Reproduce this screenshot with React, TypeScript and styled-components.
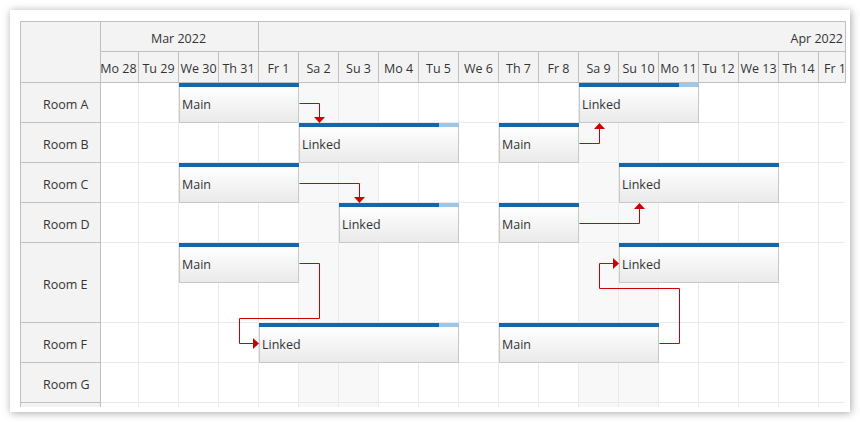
import React from 'react';
import styled, { createGlobalStyle } from 'styled-components';

const CELL = 40;

const days = [
  'Mo 28', 'Tu 29', 'We 30', 'Th 31', 'Fr 1', 'Sa 2', 'Su 3', 'Mo 4', 'Tu 5', 'We 6',
  'Th 7', 'Fr 8', 'Sa 9', 'Su 10', 'Mo 11', 'Tu 12', 'We 13', 'Th 14', 'Fr 15'
];

const isWeekend = (i: number) => i % 7 === 5 || i % 7 === 6;

interface SchedEvent {
  text: string;
  start: number;
  days: number;
  done?: number;
}

interface Room {
  id: string;
  name: string;
  height: number;
  events: SchedEvent[];
}

const rooms: Room[] = [
  { id: 'A', name: 'Room A', height: 40, events: [
    { text: 'Main', start: 2, days: 3 },
    { text: 'Linked', start: 12, days: 3, done: 83.34 }
  ] },
  { id: 'B', name: 'Room B', height: 40, events: [
    { text: 'Linked', start: 5, days: 4, done: 87.5 },
    { text: 'Main', start: 10, days: 2 }
  ] },
  { id: 'C', name: 'Room C', height: 40, events: [
    { text: 'Main', start: 2, days: 3 },
    { text: 'Linked', start: 13, days: 4 }
  ] },
  { id: 'D', name: 'Room D', height: 40, events: [
    { text: 'Linked', start: 6, days: 3, done: 83.34 },
    { text: 'Main', start: 10, days: 2 }
  ] },
  { id: 'E', name: 'Room E', height: 80, events: [
    { text: 'Main', start: 2, days: 3 },
    { text: 'Linked', start: 13, days: 4 }
  ] },
  { id: 'F', name: 'Room F', height: 40, events: [
    { text: 'Linked', start: 4, days: 5, done: 90 },
    { text: 'Main', start: 10, days: 4 }
  ] },
  { id: 'G', name: 'Room G', height: 40, events: [] },
  // next row, only its top edge is visible
  { id: 'H', name: '', height: 40, events: [] }
];

type Pt = [number, number];
type Dir = 'down' | 'up' | 'right';

// link routes in body pixel coordinates (day 0 / Room A top = 0,0)
const links: { points: Pt[]; dir: Dir }[] = [
  { points: [[200, 20], [220, 20], [220, 40]], dir: 'down' },
  { points: [[200, 100], [260, 100], [260, 120]], dir: 'down' },
  { points: [[480, 60], [500, 60], [500, 40]], dir: 'up' },
  { points: [[480, 140], [540, 140], [540, 120]], dir: 'up' },
  { points: [[200, 180], [220, 180], [220, 235], [140, 235], [140, 260], [160, 260]], dir: 'right' },
  { points: [[560, 260], [580, 260], [580, 205], [500, 205], [500, 180], [520, 180]], dir: 'right' }
];

const linkShape = (points: Pt[], dir: Dir) => {
  const [tx, ty] = points[points.length - 1];
  let tip: Pt;
  let base: Pt;
  let arrow: Pt[];
  if (dir === 'down') {
    tip = [tx + 0.5, ty];
    base = [tx + 0.5, ty - 6];
    arrow = [[tx - 5, ty - 6], [tx + 6, ty - 6], tip];
  } else if (dir === 'up') {
    tip = [tx + 0.5, ty];
    base = [tx + 0.5, ty + 6];
    arrow = [[tx - 5, ty + 6], [tx + 6, ty + 6], tip];
  } else {
    tip = [tx, ty + 0.5];
    base = [tx - 6, ty + 0.5];
    arrow = [[tx - 6, ty - 5], [tx - 6, ty + 6], tip];
  }
  const line = [...points.slice(0, -1).map(([x, y]) => [x + 0.5, y + 0.5]), base]
    .map((p) => p.join(','))
    .join(' ');
  return { line, arrow: arrow.map((p) => p.join(',')).join(' ') };
};

const App: React.FC = () => {
  return (
    <>
      <GlobalStyle />
      <Page>
        <Card>
          <Scheduler>
            <Corner />
            <HeaderViewport>
              <HeaderInner>
                <MonthRow>
                  <MonthCell $width={4 * CELL}>Mar 2022</MonthCell>
                  <MonthCell $grow>Apr 2022</MonthCell>
                </MonthRow>
                <DayRow>
                  {days.map((d) => (
                    <DayCell key={d}>{d}</DayCell>
                  ))}
                </DayRow>
              </HeaderInner>
            </HeaderViewport>

            <RowHeaderColumn>
              {rooms.map((r) => (
                <RowHeaderCell key={r.id} $height={r.height}>
                  {r.name}
                </RowHeaderCell>
              ))}
            </RowHeaderColumn>

            <BodyViewport>
              <BodyInner>
                {rooms.map((r) => (
                  <Row key={r.id} $height={r.height}>
                    {days.map((d, i) => (
                      <Cell key={d} $weekend={isWeekend(i)} />
                    ))}
                    {r.events.map((e) => (
                      <EventBox
                        key={e.text}
                        style={{ left: e.start * CELL, width: e.days * CELL }}
                      >
                        <EventBar>
                          <EventBarDone style={{ width: `${e.done ?? 100}%` }} />
                        </EventBar>
                        <EventBody>{e.text}</EventBody>
                      </EventBox>
                    ))}
                  </Row>
                ))}
                <Links width={days.length * CELL} height={324}>
                  {links.map((l, i) => {
                    const s = linkShape(l.points, l.dir);
                    return (
                      <g key={i}>
                        <polyline points={s.line} fill="none" stroke="#cc0000" strokeWidth={1} />
                        <polygon points={s.arrow} fill="#cc0000" />
                      </g>
                    );
                  })}
                </Links>
              </BodyInner>
            </BodyViewport>
          </Scheduler>
        </Card>
      </Page>
    </>
  );
};

export default App;

const GlobalStyle = createGlobalStyle`
  body {
    margin: 0;
    background: #ffffff;
    font-family: "Open Sans", "Noto Sans", sans-serif;
    color: #333333;
  }
`;

const Page = styled.div`
  padding: 10px;
`;

const Card = styled.div`
  box-sizing: border-box;
  width: 840px;
  height: 402px;
  padding: 11px 4px 5px 10px;
  background: #ffffff;
  box-shadow: 1px 1px 8px rgba(0, 0, 0, 0.35);
`;

const Scheduler = styled.div`
  display: grid;
  grid-template-columns: 80px 745px;
  grid-template-rows: 61px 324px;
  border-top: 1px solid #c0c0c0;
  border-left: 1px solid #c0c0c0;
  font-size: 12.5px;
  color: #333333;
`;

const Corner = styled.div`
  box-sizing: border-box;
  background: #f3f3f3;
  border-right: 1px solid #c0c0c0;
  border-bottom: 1px solid #c0c0c0;
`;

const HeaderViewport = styled.div`
  box-sizing: border-box;
  overflow: hidden;
  background: #f3f3f3;
  border-right: 1px solid #c0c0c0;
  border-bottom: 1px solid #c0c0c0;
`;

const HeaderInner = styled.div`
  width: 746px;
  margin-left: -2px;
`;

const MonthRow = styled.div`
  display: flex;
  height: 30px;
`;

const MonthCell = styled.div<{ $width?: number; $grow?: boolean }>`
  box-sizing: border-box;
  display: flex;
  align-items: center;
  justify-content: ${({ $grow }) => ($grow ? 'flex-end' : 'center')};
  flex: ${({ $grow, $width }) => ($grow ? '1 1 auto' : `0 0 ${$width}px`)};
  padding-top: 4px;
  padding-right: ${({ $grow }) => ($grow ? '2px' : '0')};
  border-bottom: 1px solid #c0c0c0;
  border-right: ${({ $grow }) => ($grow ? 'none' : '1px solid #c0c0c0')};
  white-space: nowrap;
`;

const DayRow = styled.div`
  display: flex;
  height: 30px;
`;

const DayCell = styled.div`
  box-sizing: border-box;
  flex: 0 0 ${CELL}px;
  display: flex;
  align-items: center;
  justify-content: center;
  padding-top: 2px;
  border-right: 1px solid #c0c0c0;
  white-space: nowrap;
  overflow: hidden;
`;

const RowHeaderColumn = styled.div`
  overflow: hidden;
`;

const RowHeaderCell = styled.div<{ $height: number }>`
  box-sizing: border-box;
  height: ${({ $height }) => $height}px;
  display: flex;
  align-items: center;
  padding: 4px 0 0 22px;
  background: #f3f3f3;
  border-right: 1px solid #c0c0c0;
  border-bottom: 1px solid #c0c0c0;
`;

const BodyViewport = styled.div`
  width: 744px;
  overflow: hidden;
  position: relative;
`;

const BodyInner = styled.div`
  position: relative;
  width: ${days.length * CELL}px;
  margin-left: -2px;
`;

const Row = styled.div<{ $height: number }>`
  box-sizing: border-box;
  position: relative;
  display: flex;
  height: ${({ $height }) => $height}px;
  border-bottom: 1px solid #eaeaea;
`;

const Cell = styled.div<{ $weekend: boolean }>`
  box-sizing: border-box;
  flex: 0 0 ${CELL}px;
  border-right: 1px solid #eaeaea;
  background: ${({ $weekend }) => ($weekend ? '#f8f8f8' : '#ffffff')};
`;

const EventBox = styled.div`
  position: absolute;
  top: 0;
  height: ${CELL}px;
  display: flex;
  flex-direction: column;
  z-index: 1;
`;

const EventBar = styled.div`
  flex: 0 0 4px;
  background: #9dc6e8;
`;

const EventBarDone = styled.div`
  height: 100%;
  background: #1766a6;
`;

const EventBody = styled.div`
  box-sizing: border-box;
  flex: 1;
  display: flex;
  align-items: center;
  padding-left: 2px;
  border: 1px solid #c8c8c8;
  border-top: none;
  background: linear-gradient(to bottom, #ffffff 0%, #eaeaea 100%);
  color: #333333;
`;

const Links = styled.svg`
  position: absolute;
  top: 0;
  left: 0;
  pointer-events: none;
  z-index: 2;
`;
